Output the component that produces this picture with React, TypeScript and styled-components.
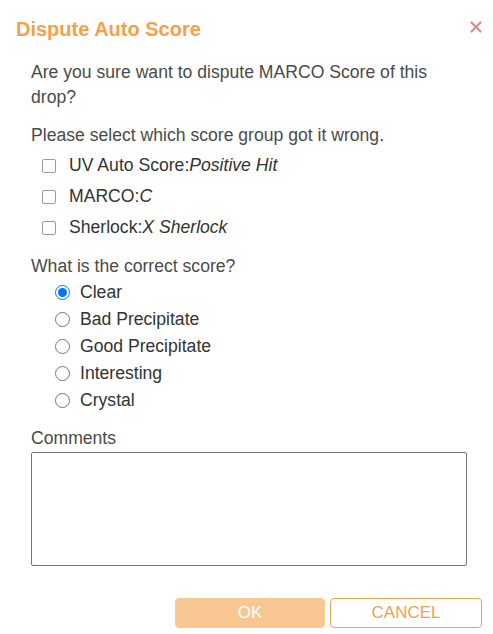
import * as React from 'react';
import { useState } from 'react';
import styled, { createGlobalStyle } from 'styled-components';

const GlobalStyle = createGlobalStyle`
  body {
    margin: 0;
    background: #fff;
    font-family: "Liberation Sans", Arial, sans-serif;
  }
`;

const Dialog = styled.div`
  width: 493px;
  height: 634px;
  box-sizing: border-box;
  padding: 18px 11px 0 16px;
  display: flex;
  flex-direction: column;
`;

const Header = styled.div`
  display: flex;
  justify-content: space-between;
  align-items: center;
  height: 22px;
`;

const Title = styled.h2`
  margin: 0;
  font-size: 20px;
  font-weight: bold;
  color: #f5a04a;
`;

const Close = styled.button`
  border: none;
  background: none;
  padding: 0;
  width: 12px;
  height: 12px;
  margin: -5px 0 0 0;
  display: flex;
  cursor: pointer;
`;

const Body = styled.div`
  padding: 20px 15px 0 15px;
  color: #4a4a4a;
  font-size: 17.6px;
  line-height: 25px;
`;

const Text = styled.p<{ $gap?: number }>`
  margin: 0 0 ${(p) => p.$gap ?? 0}px;
`;

const CheckList = styled.div`
  display: flex;
  flex-direction: column;
  padding-left: 11px;
  margin-top: 2px;
  margin-bottom: 11px;
`;

const CheckRow = styled.label`
  display: flex;
  align-items: center;
  height: 31px;
  color: #333;
  input {
    appearance: none;
    box-sizing: border-box;
    width: 14px;
    height: 14px;
    margin: 0 13px 0 0;
    border: 1px solid #9a9a9a;
    border-radius: 2px;
    background: #fff;
  }
  em {
    font-style: italic;
  }
`;

const RadioList = styled.div`
  display: flex;
  flex-direction: column;
  padding-left: 24px;
  margin-bottom: 12px;
`;

const RadioRow = styled.label`
  display: flex;
  align-items: center;
  height: 27px;
  color: #333;
  input {
    width: 15px;
    height: 15px;
    margin: 0 10px 0 0;
  }
`;

const Comments = styled.textarea`
  display: block;
  width: 436px;
  height: 114px;
  box-sizing: border-box;
  border: 1px solid #767676;
  border-radius: 2px;
  margin-top: 1px;
  resize: none;
  font-family: inherit;
  font-size: 14px;
`;

const Footer = styled.div`
  display: flex;
  justify-content: flex-end;
  gap: 5px;
  margin-top: 32px;
`;

const Button = styled.button<{ $primary?: boolean }>`
  width: ${(p) => (p.$primary ? 150 : 152)}px;
  height: 30px;
  box-sizing: border-box;
  border-radius: 4px;
  font-family: inherit;
  font-size: 17px;
  cursor: pointer;
  border: 1px solid ${(p) => (p.$primary ? '#f9c892' : '#f5a04a')};
  background: ${(p) => (p.$primary ? '#f9c892' : '#fff')};
  color: ${(p) => (p.$primary ? '#fff' : '#f5a04a')};
`;

const groups = [
  { name: 'UV Auto Score:', value: 'Positive Hit' },
  { name: 'MARCO:', value: 'C' },
  { name: 'Sherlock:', value: 'X Sherlock' },
];

const scores = ['Clear', 'Bad Precipitate', 'Good Precipitate', 'Interesting', 'Crystal'];

export default function App() {
  const [score, setScore] = useState('Clear');

  return (
    <>
      <GlobalStyle />
      <Dialog>
        <Header>
          <Title>Dispute Auto Score</Title>
          <Close aria-label="close">
            <svg width="12" height="12" viewBox="0 0 12 12">
              <path d="M1.5 1.5 L10.5 10.5 M10.5 1.5 L1.5 10.5" stroke="#e08a8e" strokeWidth="2.2" strokeLinecap="round" />
            </svg>
          </Close>
        </Header>
        <Body>
          <Text $gap={13}>Are you sure want to dispute MARCO Score of this drop?</Text>
          <Text>Please select which score group got it wrong.</Text>
          <CheckList>
            {groups.map((g) => (
              <CheckRow key={g.name}>
                <input type="checkbox" />
                {g.name}
                <em>{g.value}</em>
              </CheckRow>
            ))}
          </CheckList>
          <Text>What is the correct score?</Text>
          <RadioList>
            {scores.map((s) => (
              <RadioRow key={s}>
                <input type="radio" name="score" checked={score === s} onChange={() => setScore(s)} />
                {s}
              </RadioRow>
            ))}
          </RadioList>
          <Text>Comments</Text>
          <Comments />
        </Body>
        <Footer>
          <Button $primary>OK</Button>
          <Button>CANCEL</Button>
        </Footer>
      </Dialog>
    </>
  );
}
